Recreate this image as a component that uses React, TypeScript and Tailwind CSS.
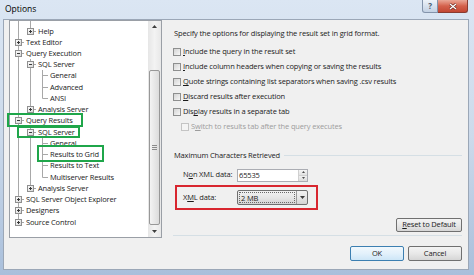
import React from "react";

type G = "line" | "tee" | "end" | "none";
interface TNode {
  label?: string;
  guides: G[];
  exp?: "plus" | "minus";
  h: number;
}

const LINE = "#a8a8a8";

function GuideCell({ g, exp, h }: { g: G; exp?: "plus" | "minus"; h: number }) {
  const cx = 6.5;
  const cy = 5.5;
  return (
    <svg width="12" height={h} viewBox={`0 0 12 ${h}`} className="block shrink-0">
      <defs>
        <linearGradient id="expg" x1="0" y1="0" x2="1" y2="1">
          <stop offset="0" stopColor="#ffffff" />
          <stop offset="1" stopColor="#d6d6d6" />
        </linearGradient>
      </defs>
      {g === "line" && <line x1={cx} y1={0} x2={cx} y2={h} stroke={LINE} strokeWidth="1" />}
      {g === "tee" && (
        <>
          <line x1={cx} y1={0} x2={cx} y2={h} stroke={LINE} strokeWidth="1" />
          <line x1={cx} y1={cy} x2={12} y2={cy} stroke={LINE} strokeWidth="1" />
        </>
      )}
      {g === "end" && (
        <>
          <line x1={cx} y1={0} x2={cx} y2={cy} stroke={LINE} strokeWidth="1" />
          <line x1={cx} y1={cy} x2={12} y2={cy} stroke={LINE} strokeWidth="1" />
        </>
      )}
      {exp && (
        <g>
          <rect x={3.5} y={2.5} width={6} height={6} fill="url(#expg)" stroke="#8f8f8f" strokeWidth="1" />
          <line x1={5} y1={5.5} x2={8} y2={5.5} stroke="#3a3a3a" strokeWidth="1" />
          {exp === "plus" && <line x1={6.5} y1={4} x2={6.5} y2={7} stroke="#3a3a3a" strokeWidth="1" />}
        </g>
      )}
    </svg>
  );
}

const nodes: TNode[] = [
  { guides: ["line", "line"], h: 5 },
  { label: "Help", guides: ["line", "end"], exp: "plus", h: 11 },
  { label: "Text Editor", guides: ["tee"], exp: "plus", h: 11 },
  { label: "Query Execution", guides: ["tee"], exp: "minus", h: 11 },
  { label: "SQL Server", guides: ["line", "tee"], exp: "minus", h: 11 },
  { label: "General", guides: ["line", "line", "tee"], h: 12 },
  { label: "Advanced", guides: ["line", "line", "tee"], h: 11 },
  { label: "ANSI", guides: ["line", "line", "end"], h: 11 },
  { label: "Analysis Server", guides: ["line", "end"], exp: "plus", h: 11 },
  { label: "Query Results", guides: ["tee"], exp: "minus", h: 12 },
  { label: "SQL Server", guides: ["line", "tee"], exp: "minus", h: 11 },
  { label: "General", guides: ["line", "line", "tee"], h: 11 },
  { label: "Results to Grid", guides: ["line", "line", "tee"], h: 11 },
  { label: "Results to Text", guides: ["line", "line", "tee"], h: 12 },
  { label: "Multiserver Results", guides: ["line", "line", "end"], h: 11 },
  { label: "Analysis Server", guides: ["line", "end"], exp: "plus", h: 11 },
  { label: "SQL Server Object Explorer", guides: ["tee"], exp: "plus", h: 11 },
  { label: "Designers", guides: ["tee"], exp: "plus", h: 12 },
  { label: "Source Control", guides: ["end"], exp: "plus", h: 11 },
];

function TreeRow({ n }: { n: TNode }) {
  return (
    <div className="flex items-start">
      {n.guides.map((g, i) => (
        <GuideCell key={i} g={g} h={n.h} exp={i === n.guides.length - 1 ? n.exp : undefined} />
      ))}
      {n.label && (
        <div className="ml-[2px] leading-[11px] whitespace-nowrap text-[#1a1a1a]">{n.label}</div>
      )}
    </div>
  );
}

function Checkbox({ disabled }: { disabled?: boolean }) {
  return (
    <div
      className={
        disabled
          ? "w-[8px] h-[8px] border border-[#c4c4c4] bg-[#f4f4f4] shrink-0"
          : "w-[8px] h-[8px] border border-[#8e8f8f] bg-gradient-to-br from-[#d4d4d4] to-[#f7f7f7] shrink-0"
      }
    />
  );
}

function CheckRow({ pre, key1, post, disabled, indent }: { pre: string; key1: string; post: string; disabled?: boolean; indent?: boolean }) {
  return (
    <div className={indent ? "h-[15px] flex items-center pl-[8px]" : "h-[15px] flex items-center"}>
      <Checkbox disabled={disabled} />
      <div className={disabled ? "ml-[2px] whitespace-nowrap text-[#9d9d9d]" : "ml-[2px] whitespace-nowrap"}>
        {pre}
        <span className="underline underline-offset-1">{key1}</span>
        {post}
      </div>
    </div>
  );
}

function Arrow({ dir }: { dir: "up" | "down" }) {
  return (
    <svg width="5" height="3" viewBox="0 0 5 3" className="block">
      {dir === "up" ? <polygon points="2.5,0 5,3 0,3" fill="#3d3d3d" /> : <polygon points="0,0 5,0 2.5,3" fill="#3d3d3d" />}
    </svg>
  );
}

export default function App() {
  return (
    <div className="w-[474px] h-[275px] overflow-hidden relative flex flex-col bg-gradient-to-b from-[#dbe6f3] via-[#ccdaeb] to-[#a9bfdb] font-['Open_Sans',sans-serif] text-[7.5px] tracking-[-0.15px] text-[#1b1b1b]">
      {/* title bar */}
      <div className="h-[19px] flex items-start shrink-0">
        <div className="pl-[5px] pt-[3px] text-[8.5px] leading-[12px] tracking-normal text-black">Options</div>
        <div className="ml-auto mr-[6px] flex">
          <div className="w-[16px] h-[13px] rounded-bl-[3px] border border-t-0 border-[#8494ab] bg-gradient-to-b from-[#eef3f9] to-[#c3d1e3] flex items-center justify-center text-[8px] font-bold text-[#4a5a70] leading-none">
            ?
          </div>
          <div className="w-[30px] h-[13px] rounded-br-[3px] border border-t-0 border-l-0 border-[#8a3b30] bg-gradient-to-b from-[#e9a797] via-[#d4614c] to-[#c24632] flex items-center justify-center">
            <svg width="8" height="7" viewBox="0 0 8 7">
              <path d="M1 1 L7 6 M7 1 L1 6" stroke="#5b1e16" strokeWidth="2.4" />
              <path d="M1 1 L7 6 M7 1 L1 6" stroke="#ffffff" strokeWidth="1.4" />
            </svg>
          </div>
        </div>
      </div>

      {/* body */}
      <div className="flex-1 flex pl-[3px] pr-[5px] pb-[5px] min-h-0">
        <div className="flex-1 border border-[#9ba7b7] bg-[#f0f0f0] flex flex-col">
          <div className="h-[218px] flex shrink-0">
            {/* tree */}
            <div className="ml-[5px] w-[153px] h-[218px] border border-[#9a9fa6] bg-white flex shrink-0">
              <div className="flex-1 pl-[2px] overflow-hidden">
                {nodes.map((n, i) => (
                  <TreeRow key={i} n={n} />
                ))}
              </div>
              <div className="w-[13px] flex flex-col bg-gradient-to-r from-[#e6e6e6] via-[#f3f3f3] to-[#e8e8e8]">
                <div className="h-[11px] flex items-center justify-center">
                  <Arrow dir="up" />
                </div>
                <div className="flex-1 pt-[38px]">
                  <div className="mx-auto w-[11px] h-[155px] rounded-[2px] border border-[#989898] bg-gradient-to-r from-[#f4f4f4] to-[#dcdcdc] flex flex-col items-center justify-center gap-[1px]">
                    <div className="w-[5px] h-px bg-[#8a8a8a]" />
                    <div className="w-[5px] h-px bg-[#8a8a8a]" />
                    <div className="w-[5px] h-px bg-[#8a8a8a]" />
                  </div>
                </div>
                <div className="h-[11px] flex items-center justify-center">
                  <Arrow dir="down" />
                </div>
              </div>
            </div>

            {/* right panel */}
            <div className="flex-1 pl-[11px] pr-[6px] flex flex-col">
              <div className="mt-[8px] ml-[1px] leading-[11px] whitespace-nowrap">
                Specify the options for displaying the result set in grid format.
              </div>
              <div className="mt-[5.5px] flex flex-col">
                <CheckRow pre="" key1="I" post="nclude the query in the result set" />
                <CheckRow pre="" key1="I" post="nclude column headers when copying or saving the results" />
                <CheckRow pre="" key1="Q" post="uote strings containing list separators when saving .csv results" />
                <CheckRow pre="" key1="D" post="iscard results after execution" />
                <CheckRow pre="Dis" key1="p" post="lay results in a separate tab" />
                <CheckRow pre="S" key1="w" post="itch to results tab after the query executes" disabled indent />
              </div>
              <div className="mt-[15px] h-[11px] flex items-center ml-[1px]">
                <div className="whitespace-nowrap leading-[11px]">Maximum Characters Retrieved</div>
                <div className="flex-1 ml-[4px] h-px bg-[#d5dfe5]" />
              </div>
              <div className="mt-[8px] h-[13px] flex items-center pl-[10px]">
                <div className="w-[54px] whitespace-nowrap">
                  N<span className="underline underline-offset-1">o</span>n XML data:
                </div>
                <div className="w-[71px] h-[13px] border border-[#abadb3] bg-white flex">
                  <div className="flex-1 pl-[1px] leading-[11px]">65535</div>
                  <div className="w-[9px] flex flex-col border-l border-[#d0d0d0]">
                    <div className="flex-1 flex items-center justify-center bg-gradient-to-b from-[#f5f5f5] to-[#e2e2e2]">
                      <svg width="3" height="2" viewBox="0 0 3 2"><polygon points="1.5,0 3,2 0,2" fill="#4d4d4d" /></svg>
                    </div>
                    <div className="flex-1 flex items-center justify-center bg-gradient-to-b from-[#f0f0f0] to-[#dcdcdc] border-t border-[#d0d0d0]">
                      <svg width="3" height="2" viewBox="0 0 3 2"><polygon points="0,0 3,0 1.5,2" fill="#4d4d4d" /></svg>
                    </div>
                  </div>
                </div>
              </div>
              <div className="mt-[3.5px] ml-[2px] w-[143px] h-[25px] border-2 border-[#d8262f] flex items-center pl-[6px]">
                <div className="w-[54px] whitespace-nowrap">
                  X<span className="underline underline-offset-1">M</span>L data:
                </div>
                <div className="w-[71px] h-[15px] rounded-[2px] border border-[#707070] bg-gradient-to-b from-[#f2f2f2] via-[#e6e6e6] to-[#d4d4d4] flex">
                  <div className="flex-1 m-[1px] pl-[1px] leading-[11px] border border-dotted border-[#6a6a6a]">2 MB</div>
                  <div className="w-[11px] border-l border-[#9a9a9a] flex items-center justify-center">
                    <Arrow dir="down" />
                  </div>
                </div>
              </div>
              <div className="mt-[8px] flex justify-end">
                <div className="w-[66px] h-[14px] rounded-[2px] border border-[#707070] bg-gradient-to-b from-[#f4f4f4] via-[#e8e8e8] to-[#d6d6d6] flex items-center justify-center whitespace-nowrap leading-none">
                  <span className="underline underline-offset-1">R</span>eset to Default
                </div>
              </div>
              <div className="mt-[3px] h-px bg-[#d5dfe5]" />
            </div>
          </div>

          {/* bottom buttons */}
          <div className="mt-[8px] flex justify-end gap-[4px] pr-[6px]">
            <div className="w-[54px] h-[15px] rounded-[2px] border border-[#3c7fb1] bg-gradient-to-b from-[#f1f8fd] via-[#e3f1fb] to-[#cde6f7] flex items-center justify-center leading-none">
              OK
            </div>
            <div className="w-[54px] h-[15px] rounded-[2px] border border-[#707070] bg-gradient-to-b from-[#f4f4f4] via-[#e8e8e8] to-[#d6d6d6] flex items-center justify-center leading-none">
              Cancel
            </div>
          </div>
        </div>
      </div>

      {/* annotation highlights */}
      <div className="absolute left-[7px] top-[113px] w-[76px] h-[14px] border-2 border-[#1fa64a]" />
      <div className="absolute left-[17px] top-[126px] w-[63px] h-[12px] border-2 border-[#1fa64a]" />
      <div className="absolute left-[37px] top-[145px] w-[67px] h-[17px] border-2 border-[#1fa64a]" />
    </div>
  );
}
